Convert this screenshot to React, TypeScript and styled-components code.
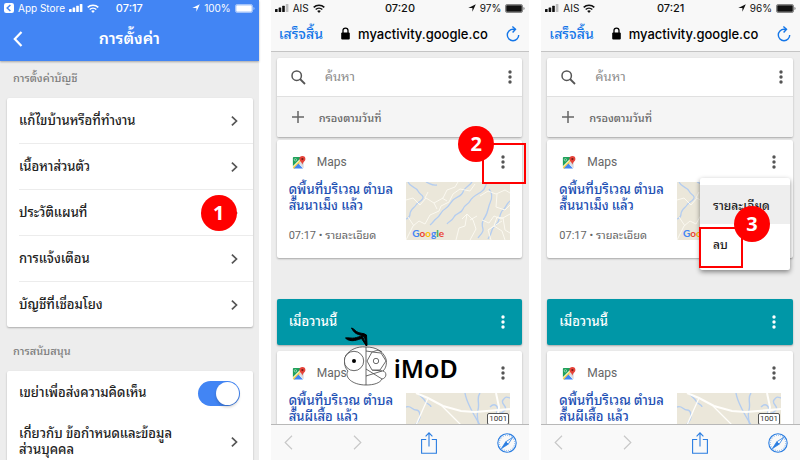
import React from 'react';
import styled, { createGlobalStyle } from 'styled-components';

const thai = `Roboto, "Noto Sans Thai Looped", Loma, "Noto Sans", sans-serif`;
const ios = `Inter, "Noto Sans Thai Looped", "Liberation Sans", sans-serif`;

const GlobalStyle = createGlobalStyle`
  *, *::before, *::after { box-sizing: border-box; }
  html, body { margin: 0; padding: 0; background: #fff; }
  body { font-family: ${thai}; color: #222; }
  button, input { font: inherit; color: inherit; }
  a { color: inherit; text-decoration: none; }
  h1, h2, h3, p, ul { margin: 0; padding: 0; font-size: inherit; font-weight: inherit; }
  ul { list-style: none; }
  svg { display: block; flex: none; }
`;

const Board = styled.main`
  display: grid;
  grid-template-columns: repeat(3, minmax(0, 1fr));
  gap: 12px;
  height: 100vh;
  overflow: hidden;
`;

const Phone = styled.section`
  position: relative;
  display: flex;
  flex-direction: column;
  min-height: 0;
  background: #ededed;
`;

const IconButton = styled.button`
  display: flex;
  align-items: center;
  justify-content: center;
  padding: 0;
  border: 0;
  background: none;
  cursor: pointer;
`;

/* ---------- status bar ---------- */

const StatusRow = styled.div`
  display: grid;
  grid-template-columns: 1fr auto 1fr;
  align-items: center;
  height: 16px;
  padding: 0 4px;
  font-family: ${ios};
  font-size: 10px;
  line-height: 16px;
`;

const StatusSide = styled.span<{ $end?: boolean }>`
  display: flex;
  align-items: center;
  justify-content: ${(p) => (p.$end ? 'flex-end' : 'flex-start')};
  gap: 4px;
  white-space: nowrap;
`;

const Clock = styled.time`
  font-size: 11px;
  font-weight: 500;
`;

const Signal = ({ weak }: { weak?: boolean }) => (
  <svg width="14" height="8" viewBox="0 0 14 8" fill="currentColor" aria-hidden="true">
    <rect x="0" y="5" width="2.6" height="3" rx=".5" />
    <rect x="3.6" y="3.6" width="2.6" height="4.4" rx=".5" />
    <rect x="7.2" y="1.8" width="2.6" height="6.2" rx=".5" />
    <rect x="10.8" y="0" width="2.6" height="8" rx=".5" opacity={weak ? 0.25 : 1} />
  </svg>
);

const Wifi = () => (
  <svg width="12" height="9" viewBox="0 0 12 9" fill="none" stroke="currentColor" aria-hidden="true">
    <path d="M.7 3.4a7.6 7.6 0 0 1 10.6 0" strokeWidth="1.6" />
    <path d="M2.7 5.5a4.8 4.8 0 0 1 6.6 0" strokeWidth="1.5" />
    <path d="M6 9 4.2 7.1a2.6 2.6 0 0 1 3.6 0z" fill="currentColor" stroke="none" />
  </svg>
);

const Locator = () => (
  <svg width="8" height="8" viewBox="0 0 8 8" fill="currentColor" aria-hidden="true">
    <path d="M7.8.2 4.4 7.8V3.9H.3z" />
  </svg>
);

const Battery = () => (
  <svg width="20" height="9" viewBox="0 0 20 9" aria-hidden="true">
    <rect x=".5" y=".5" width="17" height="8" rx="1.6" fill="none" stroke="currentColor" strokeOpacity=".5" />
    <rect x="1.2" y="1.2" width="15.6" height="6.6" rx=".8" fill="currentColor" />
    <path d="M18.4 3v3q1.2-.4 1.2-1.5T18.4 3z" fill="currentColor" opacity=".5" />
  </svg>
);

const BackToApp = () => (
  <svg width="10" height="10" viewBox="0 0 10 10" aria-hidden="true">
    <rect width="10" height="10" rx="2.2" fill="#fff" />
    <path d="M6.4 2 3.2 5l3.2 3" fill="none" stroke="#4285f4" strokeWidth="1.5" />
  </svg>
);

interface StatusProps {
  carrier: string;
  time: string;
  charge: string;
  fromApp?: boolean;
}

const StatusBar = ({ carrier, time, charge, fromApp }: StatusProps) => (
  <StatusRow>
    <StatusSide>
      {fromApp ? <BackToApp /> : <Signal weak />}
      <span>{carrier}</span>
      {fromApp && <Signal />}
      <Wifi />
    </StatusSide>
    <Clock>{time}</Clock>
    <StatusSide $end>
      <Locator />
      <span>{charge}</span>
      <Battery />
    </StatusSide>
  </StatusRow>
);

/* ---------- settings screen ---------- */

const AppHeader = styled.header`
  background: #4285f4;
  color: #fff;
  box-shadow: 0 1px 2px rgba(0, 0, 0, 0.3);
`;

const AppNav = styled.div`
  display: grid;
  grid-template-columns: 36px 1fr 36px;
  align-items: center;
  height: 45px;
`;

const AppTitle = styled.h1`
  text-align: center;
  font-size: 16px;
  font-weight: 600;
  line-height: 24px;
`;

const SectionLabel = styled.h2`
  padding: 8px 13px 9px;
  color: #7d7d7d;
  font-size: 11px;
  font-weight: 500;
  line-height: 20px;
`;

const SecondLabel = styled(SectionLabel)`
  padding: 15px 13px 9px;
`;

const SettingsCard = styled.ul`
  margin: 0 6px 0 7px;
  background: #fff;
  border-radius: 2px;
  box-shadow: 0 1px 2px rgba(0, 0, 0, 0.28);
`;

const SettingsItem = styled.li<{ $plain?: boolean }>`
  position: relative;
  margin-left: 12px;
  border-bottom: ${(p) => (p.$plain ? '0' : '1px solid #ececec')};
  &:last-child { border-bottom: 0; }
`;

const itemBox = `
  display: flex;
  align-items: center;
  justify-content: space-between;
  font-size: 13px;
  font-weight: 500;
  line-height: 16px;
`;

const SettingsLink = styled.a<{ $tall?: boolean }>`
  ${itemBox}
  min-height: ${(p) => (p.$tall ? 54 : 45)}px;
  padding: 0 15px 0 0;
`;

const LongLabel = styled.span`
  max-width: 168px;
`;

const ToggleLabel = styled.label`
  ${itemBox}
  min-height: 44px;
  padding: 0 13px 0 0;
`;

const Toggle = styled.input`
  appearance: none;
  position: relative;
  width: 42px;
  height: 25px;
  margin: 0;
  border-radius: 13px;
  background: #ccc;
  cursor: pointer;
  &:checked { background: #4285f4; }
  &::after {
    content: '';
    position: absolute;
    top: 1px;
    left: 1px;
    width: 23px;
    height: 23px;
    border-radius: 50%;
    background: #fff;
    box-shadow: 0 2px 3px rgba(0, 0, 0, 0.2);
  }
  &:checked::after { left: 18px; }
`;

const ChevronRight = () => (
  <svg width="8" height="12" viewBox="0 0 8 12" fill="none" stroke="#555" strokeWidth="1.7" aria-hidden="true">
    <path d="m1.9 1.6 4.6 4.4-4.6 4.4" />
  </svg>
);

/* ---------- annotations ---------- */

const Badge = styled.span<{ $top: number; $right: number }>`
  position: absolute;
  z-index: 3;
  top: ${(p) => p.$top}px;
  right: ${(p) => p.$right}px;
  display: flex;
  align-items: center;
  justify-content: center;
  width: 36px;
  height: 36px;
  border-radius: 50%;
  background: #f00;
  color: #fff;
  font-family: "Noto Sans", sans-serif;
  font-size: 20px;
  font-weight: 700;
  line-height: 24px;
`;

const Highlight = styled.span<{ $top: number; $right: number }>`
  position: absolute;
  z-index: 2;
  top: ${(p) => p.$top}px;
  right: ${(p) => p.$right}px;
  width: 44px;
  height: 41px;
  border: 2px solid #f00;
  pointer-events: none;
`;

/* ---------- browser screen ---------- */

const BrowserHeader = styled.header`
  flex: none;
  background: #f8f8f8;
  border-bottom: 1px solid #c4c4c4;
  color: #111;
`;

const AddressRow = styled.div`
  display: flex;
  align-items: center;
  height: 35px;
  padding: 0 9px 0 8px;
`;

const DoneButton = styled.button`
  padding: 0;
  border: 0;
  background: none;
  color: #1476e8;
  font-size: 14px;
  font-weight: 500;
  line-height: 24px;
  white-space: nowrap;
  cursor: pointer;
`;

const Address = styled.span`
  display: flex;
  flex: 1;
  align-items: center;
  gap: 8px;
  min-width: 0;
  margin: 0 12px 0 18px;
  color: #000;
  font-family: ${ios};
  font-size: 13px;
  font-weight: 500;
  line-height: 20px;
  white-space: nowrap;
`;

const Feed = styled.div`
  flex: 1;
  min-height: 0;
  padding: 6px 7px 0 6px;
  overflow: hidden;
`;

const Card = styled.article`
  position: relative;
  background: #fff;
  border-radius: 2px;
  box-shadow: 0 1px 2px rgba(0, 0, 0, 0.3);
`;

const SearchCard = styled(Card)`
  margin-bottom: 3px;
`;

const SearchRow = styled.label`
  display: flex;
  align-items: center;
  height: 39px;
  padding: 0 9px 0 14px;
  border-bottom: 1px solid #e0e0e0;
`;

const SearchInput = styled.input`
  flex: 1;
  min-width: 0;
  margin-left: 19px;
  padding: 0;
  border: 0;
  outline: 0;
  background: none;
  font-size: 13px;
  line-height: 24px;
  &::placeholder { color: #8c8c8c; opacity: 1; }
`;

const FilterButton = styled.button`
  display: flex;
  align-items: center;
  gap: 15px;
  width: 100%;
  height: 40px;
  padding: 0 15px;
  border: 0;
  border-radius: 0 0 2px 2px;
  background: #f5f5f5;
  color: #666;
  font-size: 11px;
  font-weight: 500;
  cursor: pointer;
`;

const ActivityCard = styled(Card)`
  height: 118px;
`;

const ActivityHead = styled.div`
  display: flex;
  align-items: center;
  gap: 11px;
  padding: 10px 16px 0 15px;
  color: #666;
  font-size: 12px;
  line-height: 24px;
`;

const Product = styled.span`
  flex: 1;
`;

const ActivityBody = styled.div`
  display: flex;
  justify-content: space-between;
  padding: 8px 12px 0;
`;

const ActivityText = styled.div`
  display: flex;
  flex-direction: column;
  justify-content: space-between;
  width: 112px;
  height: 62px;
`;

const ActivityTitle = styled.a`
  color: #1d4fb3;
  font-size: 13px;
  font-weight: 500;
  line-height: 16px;
  white-space: nowrap;
`;

const Meta = styled.p`
  color: #666;
  font-size: 11px;
  line-height: 16px;
  white-space: nowrap;
`;

const DayBar = styled.div`
  display: flex;
  align-items: center;
  justify-content: space-between;
  height: 46px;
  margin: 41px 0 6px;
  padding: 0 16px 0 12px;
  border-radius: 2px;
  background: #0097a7;
  box-shadow: 0 1px 2px rgba(0, 0, 0, 0.3);
  color: #fff;
  font-size: 13px;
  font-weight: 500;
  line-height: 20px;
`;

const Toolbar = styled.nav`
  display: flex;
  flex: none;
  align-items: center;
  justify-content: space-between;
  height: 36px;
  padding: 0 12px 0 13px;
  border-top: 1px solid #b8b8b8;
  background: #f9f9f9;
`;

const Menu = styled.div`
  position: absolute;
  z-index: 1;
  top: 38px;
  right: 3px;
  width: 90px;
  padding: 7px 0;
  border-radius: 2px;
  background: #fff;
  box-shadow: 0 2px 5px rgba(0, 0, 0, 0.45);
`;

const MenuItem = styled.button<{ $active?: boolean }>`
  display: block;
  width: 100%;
  height: 39px;
  padding: 0 0 0 13px;
  border: 0;
  background: ${(p) => (p.$active ? '#eeeeee' : '#fff')};
  color: #222;
  font-size: 12px;
  font-weight: 500;
  text-align: left;
  white-space: nowrap;
  cursor: pointer;
`;

const Watermark = styled.div`
  position: absolute;
  z-index: 2;
  top: 326px;
  left: 73px;
  display: flex;
  align-items: flex-end;
  gap: 7px;
  color: #000;
  font-family: "Noto Sans", sans-serif;
  font-size: 25px;
  font-weight: 600;
  line-height: 36px;
`;

const Dots = ({ color = '#555' }: { color?: string }) => (
  <svg width="6" height="14" viewBox="0 0 6 14" fill={color} aria-hidden="true">
    <circle cx="3" cy="2" r="1.7" />
    <circle cx="3" cy="7" r="1.7" />
    <circle cx="3" cy="12" r="1.7" />
  </svg>
);

const More = ({ color }: { color?: string }) => (
  <IconButton aria-label="เพิ่มเติม">
    <Dots color={color} />
  </IconButton>
);

const Lock = () => (
  <svg width="9" height="13" viewBox="0 0 9 13" aria-hidden="true">
    <rect x=".2" y="5.4" width="8.6" height="7.2" rx="1.1" />
    <path d="M2 6V3.6a2.5 2.5 0 0 1 5 0V6" fill="none" stroke="#000" strokeWidth="1.3" />
  </svg>
);

const Reload = () => (
  <svg width="14" height="16" viewBox="0 0 14 16" fill="none" stroke="#1476e8" strokeWidth="1.4" aria-hidden="true">
    <path d="M9.2 3.3H7A5.7 5.7 0 1 0 12.7 9" />
    <path d="M6.4.5 9.5 3.3 6.6 6.4" />
  </svg>
);

const SearchIcon = () => (
  <svg width="15" height="15" viewBox="0 0 15 15" fill="none" stroke="#555" strokeWidth="1.5" aria-hidden="true">
    <circle cx="5.7" cy="5.7" r="4.7" />
    <path d="m9 9 5 5" strokeWidth="1.8" />
  </svg>
);

const Plus = () => (
  <svg width="12" height="12" viewBox="0 0 12 12" stroke="#666" strokeWidth="1.5" aria-hidden="true">
    <path d="M6 0v12M0 6h12" />
  </svg>
);

const MapsLogo = () => (
  <svg width="14" height="13" viewBox="0 0 14 13" aria-hidden="true">
    <path d="M.9 1.8q0-.8.8-.8h8.3L.9 10.2z" fill="#1fa15a" />
    <path d="M.9 10.6 9.8 2l1.7 3L6.5 9.2 3 12.4H1.8a.9.9 0 0 1-.9-.9z" fill="#fbd34b" />
    <path d="M6.4 7.6 11 12.4H1.7z" fill="#4285f4" />
    <path d="m7 7.1 4.7-4.5v9l-.5.6z" fill="#dadce0" />
    <path d="M.9 10.8 9 2.7" stroke="#fff" strokeWidth=".7" />
    <circle cx="3.4" cy="3.8" r="1.2" fill="none" stroke="#c9ecd7" strokeWidth=".6" />
    <path d="M10.4.1a3 3 0 0 1 3 3c0 2.2-2.3 2.7-3 5.7-.7-3-3-3.5-3-5.7a3 3 0 0 1 3-3z" fill="#e5433a" />
    <circle cx="10.4" cy="3.1" r="1.1" fill="#7d1d16" />
  </svg>
);

const GoogleMark = styled.span`
  position: absolute;
  left: 6px;
  bottom: 0;
  font-family: Lato, sans-serif;
  font-size: 10px;
  font-weight: 700;
  line-height: 14px;
`;

const Tint = styled.span<{ $c: string }>`
  color: ${(p) => p.$c};
`;

const RoadSign = styled.span`
  position: absolute;
  top: 20px;
  right: 1px;
  padding: 0 1px;
  border: 1px solid #555;
  border-radius: 2px;
  background: #fff;
  color: #333;
  font-size: 8px;
  line-height: 10px;
`;

const MapFrame = styled.div`
  position: relative;
  width: 104px;
  height: 58px;
  overflow: hidden;
`;

const RiverMap = () => (
  <MapFrame>
    <svg width="104" height="58" viewBox="0 0 104 58" fill="none" aria-hidden="true">
      <rect width="104" height="58" fill="#ebe7da" />
      <g stroke="#b4cdf0" strokeWidth="1.3">
        <path d="M2 0c2 5 8 5 10 9s4 3 5 6-5 5-7 8-6 5-6 9-2 4-4 5" />
        <path d="M66 0c-3 4-8 6-9 10s-7 5-10 8-4 7-8 9-4 6-8 9-4 5-7 7" />
        <path d="M81 0c-2 4-1 7-6 10s-9 5-11 9-6 4-7 8-7 4-9 8-5 4-7 7" />
        <path d="M83 7c4 5 3 10 1 14s-2 10-5 14-3 9-2 12-3 6-5 9" />
        <path d="M104 19c-4 3-4 7-7 9s-3 8-5 12-5 4-6 8-2 6-4 9" />
        <path d="M20 0c5 2 6 4 11 3" />
      </g>
      <g stroke="#fbf9f1" strokeWidth="1">
        <path d="M0 18l7-2 7 7 6-7 8 5 9-5 4-8 8-3 3-5" />
        <path d="M0 58l7-14 6-5 6 3 5-9 9-4 2-5 8-4 4-8 7-5 10 2 5-7" />
        <path d="M50 58l3-12 6-2 2-12 6 6 3 9-6 11M61 32l-5 5M64 38l7-4" />
        <path d="M76 38l7 3 5-7 7 3 9-5M85 58l-3-10 6-4 8 5 3 9M88 44l3-9 6 1 2 12 5 3M74 14l8-5 8 3 9-4 5 3M91 12l-1 13 9 3 5-5" />
        <path d="M19 16l3-6M28 21l3 6M36 16l5 3M8 44l-6-9M82 48l14-9" />
      </g>
    </svg>
    <GoogleMark aria-label="Google">
      <Tint $c="#4285f4">G</Tint>
      <Tint $c="#ea4335">o</Tint>
      <Tint $c="#fbbc05">o</Tint>
      <Tint $c="#4285f4">g</Tint>
      <Tint $c="#34a853">l</Tint>
      <Tint $c="#ea4335">e</Tint>
    </GoogleMark>
  </MapFrame>
);

const RoadMap = () => (
  <MapFrame>
    <svg width="104" height="58" viewBox="0 0 104 58" fill="none" aria-hidden="true">
      <rect width="104" height="58" fill="#ebe7da" />
      <g stroke="#b4cdf0" strokeWidth="1.4">
        <path d="M0 14c5-2 6 3 10 3s5 6 3 10-6 5-3 9-2 8-4 12" />
        <path d="M12 0c2 4 5 4 7 8s6 3 6 6" />
        <path d="M59 0c1 7 4 12 7 18s8 14 14 24" />
        <path d="M74 0c-4 5 0 10-2 17s0 14 3 22" />
        <path d="M84 14c5-5 9 0 7 4s5 3 8-1-5-6-2-10 4-3 7-2" />
        <path d="M84 25c3-5 8-2 9-6" />
      </g>
      <g stroke="#fffefb" strokeWidth="2">
        <path d="M10 0l12 5 15 8 18 5 14 1 35-3" />
        <path d="M90 0l3 14-2 14" />
        <path d="M22 5L10 32M36 13l20 20" strokeWidth="1.3" />
      </g>
    </svg>
    <RoadSign>1001</RoadSign>
  </MapFrame>
);

const Arrow = ({ back }: { back?: boolean }) => (
  <svg width="9" height="15" viewBox="0 0 9 15" fill="none" stroke="#c8c8c8" strokeWidth="1.2" aria-hidden="true">
    <path d={back ? 'M8 .8 1.2 7.5 8 14.2' : 'M1 .8l6.8 6.7L1 14.2'} />
  </svg>
);

const Share = () => (
  <svg width="16" height="22" viewBox="0 0 16 22" fill="none" stroke="#2a7de1" strokeWidth="1.1" aria-hidden="true">
    <path d="M5.2 7.5H.6v13.8h14.8V7.5h-4.6" />
    <path d="M8 14.5V1M4.6 4.3 8 .9l3.4 3.4" />
  </svg>
);

const Compass = () => (
  <svg width="20" height="20" viewBox="0 0 20 20" fill="none" stroke="#2a7de1" aria-hidden="true">
    <circle cx="10" cy="10" r="9.2" strokeWidth="1.1" />
    <circle cx="10" cy="10" r="7.6" strokeWidth="1" strokeDasharray=".5 1.49" />
    <path d="m15.6 4.4-4.4 6.8-2.4-2.4z" strokeWidth=".8" />
    <path d="m4.4 15.6 4.4-6.8 2.4 2.4z" fill="#2a7de1" strokeWidth=".8" />
  </svg>
);

const Monkey = () => (
  <svg width="43" height="60" viewBox="0 0 43 60" fill="none" stroke="#444" strokeWidth=".8" aria-hidden="true">
    <path
      d="M22 21C13 20 6 24 2 29c-3 7-1 13 2 16-4 6 4 14 18 14 8 0 14-2 16-6 5-1 5-7 1-8 3-3 4-7 3-12-3-8-10-12-20-12z"
      fill="#fff"
      fillOpacity=".8"
    />
    <path d="M22 21v38M22 25l7 1M22 43l16 10M38 45 22 50M28 44l11 1M29 26c3-2 6-2 9 0" />
    <circle cx="10" cy="35" r="9.7" fill="#fff" />
    <path d="m28 26 9 1 5 8-6 9-8 0-5-9z" fill="#fff" />
    <circle cx="32" cy="35" r="2.7" />
    <circle cx="10" cy="35" r="2" fill="#000" stroke="none" />
    <g fill="#000" stroke="#000" strokeWidth="1" strokeLinejoin="round">
      <path d="M7.5 2c2 4 4 5.500 7 6.500s4 1.500 6 2.500l2 9 .5-1-.5-10c-3-2.500-7-1-10-3.500C10.500 4 9.500 2.500 7.500 2z" />
      <path d="M1.500 12c2 2.500 6 3 9 2.500s5-1.500 7-2l5 7.500-4-9.500c-3-.5-5 1-8 1.500s-6-.5-9 0z" />
    </g>
  </svg>
);

interface ActivityProps {
  place: string;
  time?: string;
  map: React.ReactNode;
  children?: React.ReactNode;
}

const Activity = ({ place, time, map, children }: ActivityProps) => (
  <ActivityCard>
    <ActivityHead>
      <MapsLogo />
      <Product>Maps</Product>
      <More />
    </ActivityHead>
    <ActivityBody>
      <ActivityText>
        <ActivityTitle href="#activity">
          ดูพื้นที่บริเวณ ตำบล
          <br />
          {place} แล้ว
        </ActivityTitle>
        {time && (
          <Meta>
            {time} • <a href="#details">รายละเอียด</a>
          </Meta>
        )}
      </ActivityText>
      {map}
    </ActivityBody>
    {children}
  </ActivityCard>
);

interface BrowserProps {
  time: string;
  charge: string;
  annotation: React.ReactNode;
  children?: React.ReactNode;
}

const Browser = ({ time, charge, annotation, children }: BrowserProps) => (
  <Phone>
    <BrowserHeader>
      <StatusBar carrier="AIS" time={time} charge={charge} />
      <AddressRow>
        <DoneButton>เสร็จสิ้น</DoneButton>
        <Address>
          <Lock />
          myactivity.google.co
        </Address>
        <IconButton aria-label="โหลดซ้ำ">
          <Reload />
        </IconButton>
      </AddressRow>
    </BrowserHeader>
    <Feed>
      <SearchCard>
        <SearchRow>
          <SearchIcon />
          <SearchInput type="text" placeholder="ค้นหา" aria-label="ค้นหา" />
          <More />
        </SearchRow>
        <FilterButton>
          <Plus />
          กรองตามวันที่
        </FilterButton>
      </SearchCard>
      <Activity place="สันนาเม็ง" time="07:17" map={<RiverMap />}>
        {annotation}
      </Activity>
      <DayBar>
        <h3>เมื่อวานนี้</h3>
        <More color="#fff" />
      </DayBar>
      <Activity place="สันผีเสื้อ" map={<RoadMap />} />
    </Feed>
    <Toolbar>
      <IconButton aria-label="ย้อนกลับ">
        <Arrow back />
      </IconButton>
      <IconButton aria-label="ไปข้างหน้า">
        <Arrow />
      </IconButton>
      <IconButton aria-label="แชร์">
        <Share />
      </IconButton>
      <IconButton aria-label="เปิดใน Safari">
        <Compass />
      </IconButton>
    </Toolbar>
    {children}
  </Phone>
);

const accountItems = [
  { label: 'แก้ไขบ้านหรือที่ทำงาน' },
  { label: 'เนื้อหาส่วนตัว' },
  { label: 'ประวัติแผนที่', step: 1 },
  { label: 'การแจ้งเตือน' },
  { label: 'บัญชีที่เชื่อมโยง' },
];

const Settings = () => (
  <Phone>
    <AppHeader>
      <StatusBar carrier="App Store" time="07:17" charge="100%" fromApp />
      <AppNav>
        <IconButton aria-label="ย้อนกลับ">
          <svg width="10" height="16" viewBox="0 0 10 16" fill="none" stroke="#fff" strokeWidth="2.2" aria-hidden="true">
            <path d="M8.5 1 1.8 8l6.7 7" />
          </svg>
        </IconButton>
        <AppTitle>การตั้งค่า</AppTitle>
      </AppNav>
    </AppHeader>
    <SectionLabel>การตั้งค่าบัญชี</SectionLabel>
    <SettingsCard>
      {accountItems.map(({ label, step }) => (
        <SettingsItem key={label}>
          <SettingsLink href="#setting">
            {label}
            <ChevronRight />
          </SettingsLink>
          {step && (
            <Badge $top={5} $right={16}>
              {step}
            </Badge>
          )}
        </SettingsItem>
      ))}
    </SettingsCard>
    <SecondLabel>การสนับสนุน</SecondLabel>
    <SettingsCard>
      <SettingsItem $plain>
        <ToggleLabel>
          เขย่าเพื่อส่งความคิดเห็น
          <Toggle type="checkbox" role="switch" defaultChecked />
        </ToggleLabel>
      </SettingsItem>
      <SettingsItem>
        <SettingsLink href="#about" $tall>
          <LongLabel>เกี่ยวกับ ข้อกำหนดและข้อมูลส่วนบุคคล</LongLabel>
          <ChevronRight />
        </SettingsLink>
      </SettingsItem>
    </SettingsCard>
  </Phone>
);

export default function App() {
  return (
    <>
      <GlobalStyle />
      <Board>
        <Settings />
        <Browser
          time="07:20"
          charge="97%"
          annotation={
            <>
              <Highlight $top={3} $right={-4} />
              <Badge $top={-14} $right={28}>
                2
              </Badge>
            </>
          }
        >
          <Watermark>
            <Monkey />
            iMoD
          </Watermark>
        </Browser>
        <Browser
          time="07:21"
          charge="96%"
          annotation={
            <>
              <Menu>
                <MenuItem $active>รายละเอียด</MenuItem>
                <MenuItem>ลบ</MenuItem>
              </Menu>
              <Highlight $top={87} $right={50} />
              <Badge $top={66} $right={23}>
                3
              </Badge>
            </>
          }
        />
      </Board>
    </>
  );
}
